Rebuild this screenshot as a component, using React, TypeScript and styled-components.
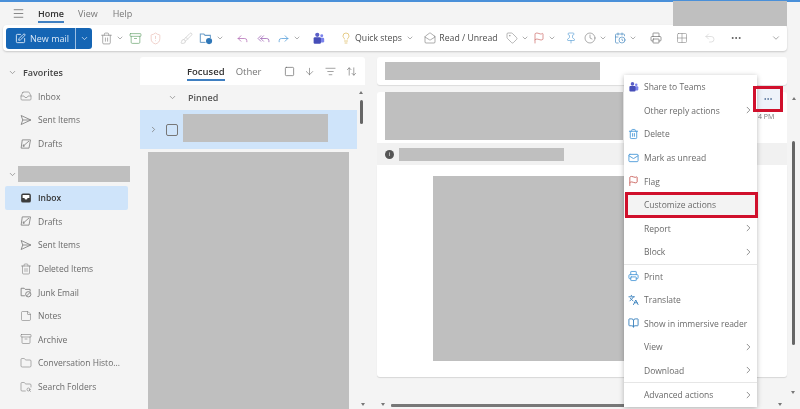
import styled, { createGlobalStyle } from "styled-components";
import {
  Archive,
  ArrowDown,
  ArrowUpDown,
  ChevronDown,
  ChevronRight,
  Clock,
  Flag,
  Folder,
  FolderSearch,
  Forward,
  Grid2x2,
  Inbox,
  Languages,
  Lightbulb,
  ListFilter,
  Mail,
  MailOpen,
  Menu,
  MoreHorizontal,
  Pin,
  Printer,
  Reply,
  ReplyAll,
  ShieldAlert,
  Square,
  SquarePen,
  StickyNote,
  Tag,
  Trash2,
  Undo2,
  Brush,
  BookOpen,
  CalendarClock,
} from "lucide-react";

const Global = createGlobalStyle`
  html, body { margin: 0; padding: 0; background: #f4f4f4; }
  body { font-family: "Open Sans", "Liberation Sans", sans-serif; }
`;

const Page = styled.div`
  position: relative;
  width: 800px;
  height: 409px;
  overflow: hidden;
  background: #f4f4f4;
  color: #4a4a4a;
  font-size: 8.5px;
  display: flex;
  flex-direction: column;
  filter: blur(0.35px);
`;

const TopLine = styled.div`
  height: 2px;
  background: #4a90d9;
  flex-shrink: 0;
`;

const TabRow = styled.div`
  height: 23px;
  display: flex;
  align-items: center;
  padding-left: 12px;
  flex-shrink: 0;
  position: relative;
  font-size: 9px;
`;

const Tab = styled.div<{ $active?: boolean; $ml: number }>`
  margin-left: ${(p) => p.$ml}px;
  font-weight: ${(p) => (p.$active ? 600 : 400)};
  color: ${(p) => (p.$active ? "#333" : "#777")};
  position: relative;
  &::after {
    content: "";
    display: ${(p) => (p.$active ? "block" : "none")};
    position: absolute;
    left: 0;
    right: 0;
    bottom: -3px;
    height: 2px;
    background: #3f7fc1;
  }
`;

const Account = styled.div`
  margin-left: auto;
  margin-right: 13px;
  width: 114px;
  height: 25px;
  margin-top: -1px;
  background: #bfbfbf;
`;

const Ribbon = styled.div`
  height: 26px;
  margin: 0 13px 0 3px;
  background: #fff;
  border-radius: 4px;
  box-shadow: 0 1px 2px rgba(0, 0, 0, 0.18);
  display: flex;
  align-items: center;
  padding-left: 3px;
  flex-shrink: 0;
`;

const NewMail = styled.div`
  width: 86px;
  height: 21px;
  background: #1565b4;
  border-radius: 3px;
  color: #dce9f7;
  display: flex;
  align-items: center;
  font-weight: 500;
  font-size: 9px;
`;

const NewMailLabel = styled.div`
  width: 70px;
  display: flex;
  align-items: center;
  gap: 4px;
  padding-left: 9px;
  box-sizing: border-box;
  border-right: 1px solid #9dbfe2;
  height: 100%;
`;

const NewMailCaret = styled.div`
  flex: 1;
  display: flex;
  justify-content: center;
`;

const Slot = styled.div<{ $ml: number; $w: number }>`
  margin-left: ${(p) => p.$ml}px;
  width: ${(p) => p.$w}px;
  display: flex;
  align-items: center;
  justify-content: center;
  gap: 3px;
  white-space: nowrap;
  font-size: 8.7px;
  font-weight: 500;
  color: #4c4c4c;
  flex-shrink: 0;
`;

const Body = styled.div`
  flex: 1;
  min-height: 0;
  display: flex;
  margin-top: 6px;
`;

const Sidebar = styled.nav`
  width: 140px;
  flex-shrink: 0;
  padding-top: 4px;
  box-sizing: border-box;
`;

const GroupHead = styled.div<{ $mt?: number }>`
  height: 23.6px;
  display: flex;
  align-items: center;
  padding-left: 8px;
  gap: 6px;
  margin-top: ${(p) => p.$mt ?? 0}px;
  font-weight: 600;
  color: #444;
  font-size: 9px;
`;

const GroupRedaction = styled.div`
  width: 112px;
  height: 16px;
  margin-left: -2px;
  background: #bfbfbf;
`;

const NavItem = styled.div<{ $active?: boolean }>`
  height: 23.6px;
  margin: 0 12px 0 5px;
  padding-left: 15px;
  border-radius: 2px;
  display: flex;
  align-items: center;
  gap: 6px;
  white-space: nowrap;
  color: ${(p) => (p.$active ? "#333" : "#6a6a6a")};
  font-weight: ${(p) => (p.$active ? 600 : 400)};
  background: ${(p) => (p.$active ? "#cfe4fa" : "transparent")};
`;

const ListPanel = styled.section`
  width: 225px;
  flex-shrink: 0;
  display: flex;
  flex-direction: column;
  min-height: 0;
`;

const ListHead = styled.div`
  height: 28px;
  background: #fff;
  border-radius: 3px 3px 0 0;
  display: flex;
  align-items: center;
  flex-shrink: 0;
  font-size: 9.5px;
`;

const ListIcon = styled.div<{ $ml: number }>`
  margin-left: ${(p) => p.$ml}px;
  display: flex;
`;

const ListMain = styled.div`
  flex: 1;
  min-height: 0;
  display: flex;
`;

const ListRows = styled.div`
  width: 217px;
  display: flex;
  flex-direction: column;
  min-height: 0;
`;

const PinnedRow = styled.div`
  height: 25px;
  display: flex;
  align-items: center;
  padding-left: 28px;
  gap: 11px;
  font-weight: 600;
  font-size: 9px;
  color: #555;
  flex-shrink: 0;
`;

const SelectedRow = styled.div`
  height: 39px;
  background: #cfe4fa;
  display: flex;
  align-items: center;
  padding-left: 9px;
  flex-shrink: 0;
`;

const RowCheck = styled.div`
  width: 10px;
  height: 10px;
  border: 1px solid #777;
  border-radius: 2px;
  margin-left: 8px;
  margin-right: 5px;
`;

const RowRedaction = styled.div`
  width: 145px;
  height: 28px;
  align-self: flex-start;
  margin-top: 4px;
  background: #bfbfbf;
`;

const ListRedaction = styled.div`
  flex: 1;
  margin: 3px 8px 0 8px;
  background: #bfbfbf;
`;

const VScroll = styled.div<{ $w: number; $top: number; $h: number; $arrow: number }>`
  width: ${(p) => p.$w}px;
  flex-shrink: 0;
  position: relative;
  &::before {
    content: "";
    position: absolute;
    left: 50%;
    margin-left: -1.5px;
    top: ${(p) => p.$top}px;
    height: ${(p) => p.$h}px;
    width: 3px;
    border-radius: 2px;
    background: #666;
  }
  &::after {
    content: "";
    position: absolute;
    left: 50%;
    margin-left: -2px;
    top: ${(p) => p.$arrow}px;
    border-left: 2px solid transparent;
    border-right: 2px solid transparent;
    border-bottom: 3px solid #777;
  }
`;

const ReadingPane = styled.section`
  width: 410px;
  margin-left: 12px;
  flex-shrink: 0;
  display: flex;
  flex-direction: column;
`;

const SubjectCard = styled.div`
  height: 28px;
  background: #fff;
  border-radius: 3px;
  display: flex;
  align-items: center;
  padding-left: 8px;
  box-shadow: 0 1px 1px rgba(0, 0, 0, 0.1);
`;

const SubjectRedaction = styled.div`
  width: 215px;
  height: 18px;
  background: #bfbfbf;
`;

const MessageCard = styled.div`
  margin-top: 7px;
  background: #fff;
  border-radius: 3px 3px 0 0;
  height: 51px;
  display: flex;
  padding-left: 8px;
  position: relative;
`;

const MessageRedaction = styled.div`
  width: 238px;
  height: 48px;
  background: #bfbfbf;
`;

const MoreButton = styled.div`
  position: absolute;
  left: 379px;
  top: -3px;
  width: 24px;
  height: 20px;
  display: flex;
  align-items: center;
  justify-content: center;
  background: #eef3fa;
  color: #4b6a93;
`;

const TimeLabel = styled.div`
  position: absolute;
  left: 381px;
  top: 20px;
  font-size: 7px;
  color: #777;
`;

const InfoRow = styled.div`
  height: 22px;
  background: #f1f1f1;
  display: flex;
  align-items: center;
  padding-left: 8px;
  gap: 5px;
`;

const InfoDot = styled.div`
  width: 9px;
  height: 9px;
  border-radius: 50%;
  background: #555;
  color: #fff;
  font-size: 6px;
  line-height: 9px;
  text-align: center;
`;

const InfoRedaction = styled.div`
  width: 165px;
  height: 13px;
  background: #bfbfbf;
`;

const MailBody = styled.div`
  height: 212px;
  background: #fff;
  border-radius: 0 0 3px 3px;
  padding: 11px 0 0 56px;
  box-sizing: border-box;
  box-shadow: 0 1px 1px rgba(0, 0, 0, 0.12);
`;

const BodyRedaction = styled.div`
  width: 250px;
  height: 185px;
  background: #bfbfbf;
`;

const HScroll = styled.div`
  position: absolute;
  left: 391px;
  bottom: 2px;
  width: 344px;
  height: 3px;
  background: #777;
  border-radius: 1px;
`;

const ScrollArrow = styled.div<{ $l: number; $b?: number }>`
  position: absolute;
  left: ${(p) => p.$l}px;
  bottom: ${(p) => p.$b ?? 3}px;
  border-left: 2px solid transparent;
  border-right: 2px solid transparent;
  border-top: 3px solid #777;
`;

const ContextMenu = styled.div`
  position: absolute;
  left: 624px;
  top: 75px;
  width: 133px;
  height: 332px;
  background: #fff;
  box-shadow: 0 1px 5px rgba(0, 0, 0, 0.28);
  box-sizing: border-box;
`;

const MenuItem = styled.div<{ $hover?: boolean }>`
  height: 23.6px;
  display: flex;
  align-items: center;
  position: relative;
  padding-left: 20px;
  color: #6a6a6a;
  white-space: nowrap;
  background: ${(p) => (p.$hover ? "#f3f3f3" : "transparent")};
`;

const MenuIcon = styled.span`
  position: absolute;
  left: 4px;
  top: 50%;
  transform: translateY(-50%);
  display: flex;
`;

const MenuArrow = styled.span`
  position: absolute;
  right: 3px;
  top: 50%;
  transform: translateY(-50%);
  display: flex;
  color: #888;
`;

const MenuDivider = styled.div`
  height: 0;
  margin-bottom: -0.5px;
  border-top: 1px solid #e6e6e6;
`;

const RedBox = styled.div<{ $l: number; $t: number; $w: number; $h: number }>`
  position: absolute;
  left: ${(p) => p.$l}px;
  top: ${(p) => p.$t}px;
  width: ${(p) => p.$w}px;
  height: ${(p) => p.$h}px;
  box-sizing: border-box;
  border: 3px solid #d0102c;
  pointer-events: none;
`;

const TeamsIcon = ({ size = 13 }: { size?: number }) => (
  <svg width={size} height={size} viewBox="0 0 16 16">
    <circle cx="6.5" cy="3.5" r="2.6" fill="#5b5fc7" />
    <circle cx="12" cy="4.6" r="1.8" fill="#7b83eb" />
    <rect x="10" y="7" width="5" height="6" rx="1.5" fill="#7b83eb" />
    <rect x="2" y="6.5" width="9" height="8" rx="1.5" fill="#464eb8" />
  </svg>
);

const MoveIcon = () => (
  <svg width="14" height="14" viewBox="0 0 16 16" fill="none">
    <path d="M1.5 13V3.5h4l1.5 1.5h6v3" stroke="#6c9ec9" strokeWidth="1.2" />
    <path d="M1.5 13h6" stroke="#6c9ec9" strokeWidth="1.2" />
    <circle cx="11.5" cy="11.5" r="3.5" fill="#2f77b8" />
  </svg>
);

const InboxFilled = () => (
  <svg width="12" height="12" viewBox="0 0 16 16">
    <rect x="1.5" y="2" width="13" height="12" rx="2.5" fill="#3c3c3c" />
    <path d="M3.5 4h9v4h-2.5a2 2 0 0 1-4 0H3.5z" fill="#fff" />
  </svg>
);

const JunkIcon = () => (
  <svg width="12" height="12" viewBox="0 0 16 16" fill="none" stroke="#777" strokeWidth="1.1">
    <path d="M1.5 13V3h4l1.5 1.5h6.5v3" />
    <path d="M1.5 13h5" />
    <circle cx="11" cy="11" r="3.5" />
    <path d="M8.6 13.4l4.8-4.8" />
  </svg>
);

const SentIcon = () => (
  <svg width="12" height="12" viewBox="0 0 16 16" fill="none" stroke="#7d7d7d" strokeWidth="1.1" strokeLinejoin="round">
    <path d="M1.5 2l13 6-13 6 2.2-6z" />
    <path d="M3.7 8h10.8" />
  </svg>
);

const DraftIcon = () => (
  <svg width="12" height="12" viewBox="0 0 16 16" fill="none" stroke="#7d7d7d" strokeWidth="1.1" strokeLinejoin="round">
    <path d="M3 2.5h11L12 13.5H1.5z" />
    <path d="M4 11l8-7" />
    <path d="M4 11l.6-2.4M4 11l2.4-.4" />
  </svg>
);

const gray = "#7d7d7d";
const caret = <ChevronDown size={8} color="#888" />;

const favorites = [
  { label: "Inbox", icon: <Inbox size={12} color={gray} strokeWidth={1.2} /> },
  { label: "Sent Items", icon: <SentIcon /> },
  { label: "Drafts", icon: <DraftIcon /> },
];

const folders = [
  { label: "Drafts", icon: <DraftIcon /> },
  { label: "Sent Items", icon: <SentIcon /> },
  { label: "Deleted Items", icon: <Trash2 size={12} color={gray} strokeWidth={1.2} /> },
  { label: "Junk Email", icon: <JunkIcon /> },
  { label: "Notes", icon: <StickyNote size={12} color={gray} strokeWidth={1.2} /> },
  { label: "Archive", icon: <Archive size={12} color={gray} strokeWidth={1.2} /> },
  { label: "Conversation Histo...", icon: <Folder size={12} color={gray} strokeWidth={1.2} /> },
  { label: "Search Folders", icon: <FolderSearch size={12} color={gray} strokeWidth={1.2} /> },
];

export default function App() {
  return (
    <Page>
      <Global />
      <TopLine />
      <TabRow>
        <Menu size={13} color="#666" strokeWidth={1.4} />
        <Tab $active $ml={13}>Home</Tab>
        <Tab $ml={14}>View</Tab>
        <Tab $ml={15}>Help</Tab>
        <Account />
      </TabRow>
      <Ribbon>
        <NewMail>
          <NewMailLabel>
            <SquarePen size={11} />
            New mail
          </NewMailLabel>
          <NewMailCaret>
            <ChevronDown size={9} />
          </NewMailCaret>
        </NewMail>
        <Slot $ml={7} $w={26}><Trash2 size={13} color="#8a8a8a" strokeWidth={1.3} />{caret}</Slot>
        <Slot $ml={2} $w={16}><Archive size={13} color="#6aa56f" strokeWidth={1.3} /></Slot>
        <Slot $ml={4} $w={16}><ShieldAlert size={13} color="#e8b9b0" strokeWidth={1.2} /></Slot>
        <Slot $ml={15} $w={16}><Brush size={13} color="#c4c4c4" strokeWidth={1.2} /></Slot>
        <Slot $ml={3} $w={28}><MoveIcon />{caret}</Slot>
        <Slot $ml={9} $w={16}><Reply size={13} color="#b36bb5" strokeWidth={1.4} /></Slot>
        <Slot $ml={5} $w={16}><ReplyAll size={13} color="#9a5fb3" strokeWidth={1.4} /></Slot>
        <Slot $ml={4} $w={27}><Forward size={13} color="#4f9bd9" strokeWidth={1.4} />{caret}</Slot>
        <Slot $ml={8} $w={16}><TeamsIcon /></Slot>
        <Slot $ml={12} $w={66}><Lightbulb size={12} color="#d9b24a" strokeWidth={1.3} />Quick steps</Slot>
        <Slot $ml={1} $w={10}>{caret}</Slot>
        <Slot $ml={7} $w={78}><MailOpen size={12} color="#777" strokeWidth={1.2} />Read / Unread</Slot>
        <Slot $ml={4} $w={26}><Tag size={12} color="#888" strokeWidth={1.2} />{caret}</Slot>
        <Slot $ml={1} $w={26}><Flag size={12} color="#c9605c" strokeWidth={1.3} />{caret}</Slot>
        <Slot $ml={6} $w={16}><Pin size={12} color="#5a9fd6" strokeWidth={1.3} /></Slot>
        <Slot $ml={3} $w={26}><Clock size={12} color="#777" strokeWidth={1.2} />{caret}</Slot>
        <Slot $ml={4} $w={26}><CalendarClock size={12} color="#3b82bd" strokeWidth={1.3} />{caret}</Slot>
        <Slot $ml={10} $w={16}><Printer size={12} color="#666" strokeWidth={1.3} /></Slot>
        <Slot $ml={10} $w={16}><Grid2x2 size={12} color="#888" strokeWidth={1.2} /></Slot>
        <Slot $ml={12} $w={16}><Undo2 size={12} color="#d0d0d0" strokeWidth={1.3} /></Slot>
        <Slot $ml={10} $w={16}><MoreHorizontal size={12} color="#555" /></Slot>
        <Slot $ml={24} $w={16}><ChevronDown size={10} color="#999" /></Slot>
      </Ribbon>
      <Body>
        <Sidebar>
          <GroupHead>
            <ChevronDown size={9} color="#888" />
            Favorites
          </GroupHead>
          {favorites.map((f) => (
            <NavItem key={f.label}>{f.icon}{f.label}</NavItem>
          ))}
          <GroupHead $mt={7}>
            <ChevronDown size={9} color="#888" style={{ marginRight: -3 }} />
            <GroupRedaction />
          </GroupHead>
          <NavItem $active><InboxFilled />Inbox</NavItem>
          {folders.map((f) => (
            <NavItem key={f.label + "2"}>{f.icon}{f.label}</NavItem>
          ))}
        </Sidebar>
        <ListPanel>
          <ListHead>
            <Tab $active $ml={47}>Focused</Tab>
            <Tab $ml={11}>Other</Tab>
            <ListIcon $ml={23}><Square size={11} color="#666" strokeWidth={1.5} /></ListIcon>
            <ListIcon $ml={9}><ArrowDown size={11} color="#666" strokeWidth={1.3} /></ListIcon>
            <ListIcon $ml={10}><ListFilter size={11} color="#666" strokeWidth={1.3} /></ListIcon>
            <ListIcon $ml={10}><ArrowUpDown size={11} color="#666" strokeWidth={1.3} /></ListIcon>
          </ListHead>
          <ListMain>
            <ListRows>
              <PinnedRow>
                <ChevronDown size={9} color="#888" />
                Pinned
              </PinnedRow>
              <SelectedRow>
                <ChevronRight size={9} color="#777" />
                <RowCheck />
                <RowRedaction />
              </SelectedRow>
              <ListRedaction />
            </ListRows>
            <VScroll $w={8} $top={15} $h={24} $arrow={6} />
          </ListMain>
        </ListPanel>
        <ReadingPane>
          <SubjectCard>
            <SubjectRedaction />
          </SubjectCard>
          <MessageCard>
            <MessageRedaction />
            <MoreButton><MoreHorizontal size={10} /></MoreButton>
            <TimeLabel>4 PM</TimeLabel>
          </MessageCard>
          <InfoRow>
            <InfoDot>i</InfoDot>
            <InfoRedaction />
          </InfoRow>
          <MailBody>
            <BodyRedaction />
          </MailBody>
        </ReadingPane>
        <VScroll $w={13} $top={84} $h={204} $arrow={40} />
      </Body>
      <HScroll />
      <ScrollArrow $l={361} />
      <ScrollArrow $l={381} />
      <ScrollArrow $l={778} />
      <ScrollArrow $l={791} $b={15} />
      <ContextMenu>
        <MenuItem><MenuIcon><TeamsIcon size={11} /></MenuIcon>Share to Teams</MenuItem>
        <MenuItem>Other reply actions<MenuArrow><ChevronRight size={11} /></MenuArrow></MenuItem>
        <MenuItem><MenuIcon><Trash2 size={11} color="#4f9bd9" /></MenuIcon>Delete</MenuItem>
        <MenuItem><MenuIcon><Mail size={11} color="#4f9bd9" /></MenuIcon>Mark as unread</MenuItem>
        <MenuItem><MenuIcon><Flag size={11} color="#c9605c" /></MenuIcon>Flag</MenuItem>
        <MenuItem $hover>Customize actions</MenuItem>
        <MenuItem>Report<MenuArrow><ChevronRight size={11} /></MenuArrow></MenuItem>
        <MenuItem>Block<MenuArrow><ChevronRight size={11} /></MenuArrow></MenuItem>
        <MenuDivider />
        <MenuItem><MenuIcon><Printer size={11} color="#4f9bd9" /></MenuIcon>Print</MenuItem>
        <MenuItem><MenuIcon><Languages size={11} color="#3b82bd" /></MenuIcon>Translate</MenuItem>
        <MenuItem><MenuIcon><BookOpen size={11} color="#3b82bd" /></MenuIcon>Show in immersive reader</MenuItem>
        <MenuItem>View<MenuArrow><ChevronRight size={11} /></MenuArrow></MenuItem>
        <MenuItem>Download<MenuArrow><ChevronRight size={11} /></MenuArrow></MenuItem>
        <MenuDivider />
        <MenuItem>Advanced actions<MenuArrow><ChevronRight size={11} /></MenuArrow></MenuItem>
      </ContextMenu>
      <RedBox $l={625} $t={192} $w={133} $h={26} />
      <RedBox $l={753} $t={86} $w={30} $h={26} />
    </Page>
  );
}
